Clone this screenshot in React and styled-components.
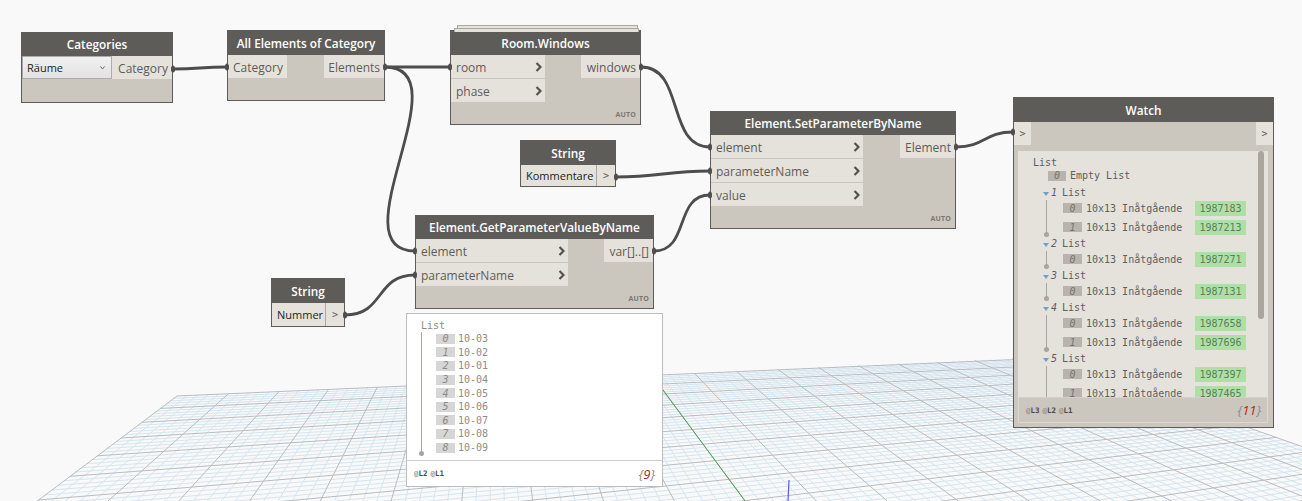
import styled, { createGlobalStyle } from "styled-components";

const GlobalStyle = createGlobalStyle`
  html, body { margin: 0; background: #f9f9f9; overflow: hidden; }
  * { box-sizing: border-box; }
`;

const SANS = `"Open Sans", "Noto Sans", sans-serif`;
const MONO = `"DejaVu Sans Mono", "Liberation Mono", monospace`;

const Canvas = styled.div`
  position: relative;
  width: 1302px;
  height: 501px;
  overflow: hidden;
  background: #f9f9f9;
  font-family: ${SANS};
`;

const Layer = styled.svg`
  position: absolute;
  left: 0;
  top: 0;
  pointer-events: none;
`;

const Node = styled.div`
  position: absolute;
  left: ${p => p.$x}px;
  top: ${p => p.$y}px;
  width: ${p => p.$w}px;
  height: ${p => p.$h}px;
  display: flex;
  flex-direction: column;
  background: #cbc6be;
  border: 1px solid #5e5c58;
`;

const StackedNode = styled(Node)`
  &::before, &::after {
    content: "";
    position: absolute;
    background: #e5e2dc;
    border: 1px solid #a9a7a2;
    border-bottom: 0;
  }
  &::before { left: 6px; right: 2px; top: -6px; height: 3px; }
  &::after { left: 3px; right: 1px; top: -3px; height: 3px; }
`;

const Header = styled.div`
  flex: none;
  height: ${p => p.$h || 24}px;
  margin: -1px -1px 0;
  display: flex;
  align-items: center;
  justify-content: center;
  background: #5e5c58;
  color: #fff;
  font-size: 11.8px;
  font-weight: 600;
`;

const Ports = styled.div`
  display: flex;
  justify-content: space-between;
  align-items: flex-start;
`;

const Column = styled.div`
  display: flex;
  flex-direction: column;
  gap: 1px;
  width: ${p => (p.$w ? `${p.$w}px` : "auto")};
`;

const Port = styled.div`
  height: 23px;
  padding: 1px 4px 0 5px;
  display: flex;
  align-items: center;
  justify-content: ${p => (p.$output ? "flex-end" : "space-between")};
  background: #e5e2dc;
  color: #5e5c58;
  font-size: 12px;
`;

const Chevron = styled.svg`
  width: 7px;
  height: 10px;
  margin-right: -1px;
  fill: none;
  stroke: #55534f;
  stroke-width: 2.2;
`;

const Lacing = styled.div`
  position: absolute;
  right: 4px;
  bottom: 5px;
  color: #7b7873;
  font-size: 7px;
  font-weight: 700;
  letter-spacing: 0.2px;
`;

const Dropdown = styled.div`
  width: 90px;
  height: 23px;
  padding: 0 5px 0 4px;
  display: flex;
  align-items: center;
  justify-content: space-between;
  background: linear-gradient(#f1f1f1, #e2e2e2);
  border: 1px solid #acacac;
  color: #222;
  font-size: 11px;
`;

const Caret = styled.svg`
  width: 5px;
  height: 4px;
  margin-right: 1px;
  fill: none;
  stroke: #666;
  stroke-width: 1;
`;

const StringBody = styled.div`
  flex: 1;
  display: flex;
  background: #e5e2dc;
`;

const StringValue = styled.div`
  flex: 1;
  display: flex;
  align-items: center;
  padding-left: 5px;
  border-right: 1px solid #a9a7a2;
  color: #222;
  font-size: 11px;
`;

const Arrow = styled.div`
  width: ${p => p.$w || 18}px;
  display: flex;
  align-items: center;
  justify-content: center;
  color: #5e5c58;
  font-family: ${MONO};
  font-size: 10px;
`;

const WatchPorts = styled.div`
  flex: none;
  height: 23px;
  display: flex;
  justify-content: space-between;
`;

const WatchArrow = styled(Arrow)`
  background: #e5e2dc;
  width: 17px;
`;

const WatchPanel = styled.div`
  position: relative;
  margin: 6px 5px 0 4px;
  height: 246px;
  padding: 5px 0 0 15px;
  overflow: hidden;
  background: #e5e2dc;
  font-family: ${MONO};
  font-size: 10px;
  color: #5b5f63;
`;

const Scrollbar = styled.div`
  position: absolute;
  right: 4px;
  top: 0;
  width: 6px;
  height: 168px;
  border-radius: 3px;
  background: #aaa69e;
`;

const ListTitle = styled.div`
  height: 13px;
  line-height: 13px;
`;

const Row = styled.div`
  height: ${p => p.$h || 16}px;
  display: flex;
  align-items: center;
  gap: ${p => p.$gap || 4}px;
  margin-left: ${p => p.$indent || 0}px;
  &:not(:first-child) { margin-top: ${p => p.$space ?? 3}px; }
`;

const Badge = styled.span`
  flex: none;
  width: ${p => p.$w || 19}px;
  height: ${p => p.$h || 10}px;
  display: flex;
  align-items: center;
  justify-content: center;
  background: ${p => (p.$light ? "#d6d6d6" : "#b8b4ad")};
  color: ${p => (p.$light ? "#8a8a8a" : "#77746e")};
  font-style: italic;
  font-size: 10px;
`;

const ItemText = styled.span`
  width: 105px;
  flex: none;
  white-space: pre;
`;

const Value = styled.span`
  width: 51px;
  height: 15px;
  display: flex;
  align-items: center;
  justify-content: center;
  background: #aee0a5;
  color: #5f7d60;
`;

const SubList = styled.div`
  margin-left: 10px;
  margin-top: ${p => (p.$first ? 2 : 0)}px;
`;

const SubHeader = styled.div`
  height: 16px;
  display: flex;
  align-items: center;
`;

const Triangle = styled.span`
  width: 0;
  height: 0;
  margin: 3px 2px 0 0;
  border-left: 3.5px solid transparent;
  border-right: 3.5px solid transparent;
  border-top: 4px solid #6d9fcb;
`;

const SubIndex = styled.span`
  width: 11px;
  font-style: italic;
`;

const Branch = styled.div`
  position: relative;
  margin-left: ${p => p.$indent ?? 3}px;
  padding-left: ${p => p.$pad || 16}px;
  border-left: 1px solid #a9a59e;
  &::after {
    content: "";
    position: absolute;
    left: -3px;
    bottom: -2px;
    width: 5px;
    height: 5px;
    border-radius: 50%;
    background: #a9a59e;
  }
`;

const WatchFooter = styled.div`
  flex: none;
  height: 26px;
  margin: 0 5px 0 4px;
  padding: 0 6px 0 7px;
  display: flex;
  align-items: center;
  justify-content: space-between;
  background: #cbc6be;
  border: 1px solid #dcd8d1;
  border-top-color: #d5d1ca;
`;

const Levels = styled.div`
  display: flex;
  gap: 3px;
  font-family: ${MONO};
  font-size: 7.5px;
  font-weight: 700;
  color: #4a4a4a;
  & i { color: #9a8f85; font-style: normal; font-weight: 700; }
`;

const Count = styled.div`
  font-family: "Open Sans", sans-serif;
  font-style: italic;
  font-size: 13px;
  color: #8a8a8a;
  & b { color: #b22a22; font-weight: 400; }
`;

const Preview = styled.div`
  position: absolute;
  left: 406px;
  top: 313px;
  width: 257px;
  height: 174px;
  display: flex;
  flex-direction: column;
  background: #fff;
  border: 1px solid #bdbdbd;
  font-family: ${MONO};
  font-size: 10px;
  color: #8c8c8c;
`;

const PreviewBody = styled.div`
  flex: 1;
  padding: 5px 0 0 14px;
`;

const PreviewFooter = styled.div`
  flex: none;
  height: 26px;
  padding: 0 7px;
  display: flex;
  align-items: center;
  justify-content: space-between;
  border-top: 1px solid #cfcfcf;
`;

// perspective grid under the nodes
const VP1 = [491, 160];
const VP2 = [2454, 297];

const backPoint = i => {
  const x = 177 + (52 * i) / (1 + 0.00963 * i);
  return [x, 396 - 0.0445 * (x - 177)];
};

const leftPoint = j => {
  const y = 396 + (11.74 * j) / (1 - 0.0538 * j);
  return [177 - (y - 396) / 0.75, y];
};

const intersect = (a, b, c, d) => {
  const d1 = [b[0] - a[0], b[1] - a[1]];
  const d2 = [d[0] - c[0], d[1] - c[1]];
  const t = ((c[0] - a[0]) * d2[1] - (c[1] - a[1]) * d2[0]) / (d1[0] * d2[1] - d1[1] * d2[0]);
  return [a[0] + d1[0] * t, a[1] + d1[1] * t];
};

const range = (max, step) => Array.from({ length: Math.round(max / step) + 1 }, (_, n) => n * step);

function GroundGrid() {
  const steep = range(20, 0.2).map(i => {
    const p = backPoint(i);
    const end = intersect(p, VP1, [0, 540], [1302, 540]);
    return { key: `i${i}`, p, end, major: Math.abs(i - Math.round(i)) < 0.01 };
  });
  const right = backPoint(20);
  const flat = range(15, 0.2).map(j => {
    const p = leftPoint(j);
    const end = intersect(p, VP2, right, VP1);
    return { key: `j${j}`, p, end, major: Math.abs(j - Math.round(j)) < 0.01 };
  });
  const lines = [...steep, ...flat].sort((a, b) => a.major - b.major);
  return (
    <Layer width="1302" height="501">
      {lines.map(l => (
        <line
          key={l.key}
          x1={l.p[0]}
          y1={l.p[1]}
          x2={l.end[0]}
          y2={l.end[1]}
          stroke={l.major ? "#b7bdc1" : "#d5e5ef"}
          strokeWidth="1"
        />
      ))}
      <line x1="652" y1="375" x2="745" y2="501" stroke="#4f9d52" strokeWidth="1" />
      <line x1="789" y1="480" x2="788" y2="501" stroke="#5a5af0" strokeWidth="1.2" />
    </Layer>
  );
}

const WIRES = [
  "M173 69 C200 69 200 67 227 67",
  "M385 67 L450 67",
  "M385 67 C465 67 335 251 415 251",
  "M641 67 C685 67 666 147 710 147",
  "M616 177 C660 177 666 171 710 171",
  "M956 147 C985 147 984 132 1013 132",
  "M654 251 C690 251 674 195 710 195",
  "M345 315 C385 315 375 275 415 275",
];

const NUBS = [
  [173, 69], [227, 67], [385, 67], [450, 67], [415, 251], [641, 67], [710, 147],
  [616, 177], [710, 171], [956, 147], [1013, 132], [654, 251], [710, 195], [345, 315], [415, 275],
];

function Wires() {
  return (
    <Layer width="1302" height="501">
      {WIRES.map(d => (
        <path key={d} d={d} fill="none" stroke="#4d4d4d" strokeWidth="2.8" />
      ))}
      {NUBS.map(([x, y]) => (
        <ellipse key={`${x}-${y}`} cx={x} cy={y} rx="2" ry="3.5" fill="#4d4d4d" />
      ))}
    </Layer>
  );
}

const Input = ({ name }) => (
  <Port>
    {name}
    <Chevron viewBox="0 0 7 10"><path d="M1.5 1 L5.5 5 L1.5 9" /></Chevron>
  </Port>
);

const WATCH_ITEMS = [
  ["1", ["1987183", "1987213"]],
  ["2", ["1987271"]],
  ["3", ["1987131"]],
  ["4", ["1987658", "1987696"]],
  ["5", ["1987397", "1987465"]],
];

const PREVIEW_ITEMS = ["10-03", "10-02", "10-01", "10-04", "10-05", "10-06", "10-07", "10-08", "10-09"];

function WatchNode() {
  return (
    <Node $x={1013} $y={97} $w={261} $h={331}>
      <Header $h={25}>Watch</Header>
      <WatchPorts>
        <WatchArrow>&gt;</WatchArrow>
        <WatchArrow>&gt;</WatchArrow>
      </WatchPorts>
      <WatchPanel>
        <Scrollbar />
        <ListTitle>List</ListTitle>
        <Row $h={13} $indent={15} $space={0}>
          <Badge $w={18}>0</Badge>
          Empty List
        </Row>
        {WATCH_ITEMS.map(([index, values], n) => (
          <SubList key={index} $first={n === 0}>
            <SubHeader>
              <Triangle />
              <SubIndex>{index}</SubIndex>
              List
            </SubHeader>
            <Branch>
              {values.map((value, k) => (
                <Row key={value}>
                  <Badge>{k}</Badge>
                  <ItemText>10x13 Inåtgående</ItemText>
                  <Value>{value}</Value>
                </Row>
              ))}
            </Branch>
          </SubList>
        ))}
      </WatchPanel>
      <WatchFooter>
        <Levels><span><i>@</i>L3</span><span><i>@</i>L2</span><span><i>@</i>L1</span></Levels>
        <Count>{"{"}<b>11</b>{"}"}</Count>
      </WatchFooter>
    </Node>
  );
}

export default function App() {
  return (
    <Canvas>
      <GlobalStyle />
      <GroundGrid />

      <Node $x={21} $y={32} $w={152} $h={71}>
        <Header>Categories</Header>
        <Ports>
          <Dropdown>
            Räume
            <Caret viewBox="0 0 5 4"><path d="M0.5 0.5 L2.5 3 L4.5 0.5" /></Caret>
          </Dropdown>
          <Column $w={60}><Port $output>Category</Port></Column>
        </Ports>
      </Node>

      <Node $x={227} $y={30} $w={158} $h={71}>
        <Header $h={25}>All Elements of Category</Header>
        <Ports>
          <Column $w={59}><Port>Category</Port></Column>
          <Column $w={60}><Port $output>Elements</Port></Column>
        </Ports>
      </Node>

      <StackedNode $x={450} $y={30} $w={191} $h={95}>
        <Header $h={25}>Room.Windows</Header>
        <Ports>
          <Column $w={94}>
            <Input name="room" />
            <Input name="phase" />
          </Column>
          <Column $w={59}><Port $output>windows</Port></Column>
        </Ports>
        <Lacing>AUTO</Lacing>
      </StackedNode>

      <Node $x={520} $y={140} $w={96} $h={47}>
        <Header $h={25}>String</Header>
        <StringBody>
          <StringValue>Kommentare</StringValue>
          <Arrow>&gt;</Arrow>
        </StringBody>
      </Node>

      <Node $x={710} $y={111} $w={246} $h={118}>
        <Header>Element.SetParameterByName</Header>
        <Ports>
          <Column $w={152}>
            <Input name="element" />
            <Input name="parameterName" />
            <Input name="value" />
          </Column>
          <Column $w={55}><Port $output>Element</Port></Column>
        </Ports>
        <Lacing>AUTO</Lacing>
      </Node>

      <Node $x={415} $y={215} $w={239} $h={94}>
        <Header>Element.GetParameterValueByName</Header>
        <Ports>
          <Column $w={152}>
            <Input name="element" />
            <Input name="parameterName" />
          </Column>
          <Column $w={49}><Port $output>var[]..[]</Port></Column>
        </Ports>
        <Lacing>AUTO</Lacing>
      </Node>

      <Node $x={271} $y={278} $w={74} $h={49}>
        <Header $h={25}>String</Header>
        <StringBody>
          <StringValue>Nummer</StringValue>
          <Arrow>&gt;</Arrow>
        </StringBody>
      </Node>

      <Preview>
        <PreviewBody>
          <ListTitle>List</ListTitle>
          <Branch $pad={14} $indent={0}>
            {PREVIEW_ITEMS.map((item, k) => (
              <Row key={item} $h={13.6} $space={0} $gap={3}>
                <Badge $light>{k}</Badge>
                {item}
              </Row>
            ))}
          </Branch>
        </PreviewBody>
        <PreviewFooter>
          <Levels><span><i>@</i>L2</span><span><i>@</i>L1</span></Levels>
          <Count>{"{"}<b>9</b>{"}"}</Count>
        </PreviewFooter>
      </Preview>

      <WatchNode />
      <Wires />
    </Canvas>
  );
}
